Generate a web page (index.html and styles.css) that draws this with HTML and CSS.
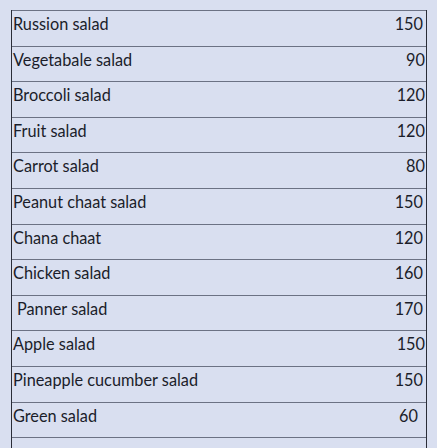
FILE: index.html
```html
<!DOCTYPE html>
<html>
<head>
<meta charset="utf-8">
<link rel="stylesheet" href="styles.css">
</head>
<body>
<div class="sheet">
  <div class="menu">
    <div class="row"><span class="name">Russion salad</span><span class="price">150</span></div>
    <div class="row"><span class="name">Vegetabale salad</span><span class="price tight">90</span></div>
    <div class="row"><span class="name">Broccoli salad</span><span class="price tight">120</span></div>
    <div class="row"><span class="name">Fruit salad</span><span class="price tight">120</span></div>
    <div class="row"><span class="name">Carrot salad</span><span class="price tight">80</span></div>
    <div class="row"><span class="name">Peanut chaat salad</span><span class="price">150</span></div>
    <div class="row"><span class="name">Chana chaat</span><span class="price">120</span></div>
    <div class="row"><span class="name">Chicken salad</span><span class="price">160</span></div>
    <div class="row"><span class="name indent">Panner salad</span><span class="price">170</span></div>
    <div class="row"><span class="name">Apple salad</span><span class="price tight">150</span></div>
    <div class="row"><span class="name">Pineapple cucumber salad</span><span class="price">150</span></div>
    <div class="row"><span class="name">Green salad</span><span class="price inset">60</span></div>
    <div class="row last"></div>
  </div>
</div>
</body>
</html>
```
FILE: styles.css
```css
html, body {
  margin: 0;
  padding: 0;
  background: #d9dff0;
}
.sheet {
  padding: 10px 0 0 11px;
  width: 437px;
  height: 448px;
  box-sizing: border-box;
  overflow: hidden;
}
.menu {
  width: 414px;
  border-left: 1px solid #2a2d38;
  border-right: 1px solid #2a2d38;
}
.row {
  display: flex;
  justify-content: space-between;
  align-items: flex-start;
  height: 35.6px;
  box-sizing: border-box;
  border-top: 1px solid #6c7284;
  padding: 3px 3px 0 1px;
  font-family: Lato, "Open Sans", sans-serif;
  font-size: 16.3px;
  color: #1b1d2a;
}
.row.last {
  height: 12px;
}
.indent {
  padding-left: 4px;
}
.price.tight {
  margin-right: -2px;
}
.inset {
  padding-right: 5px;
}
```
